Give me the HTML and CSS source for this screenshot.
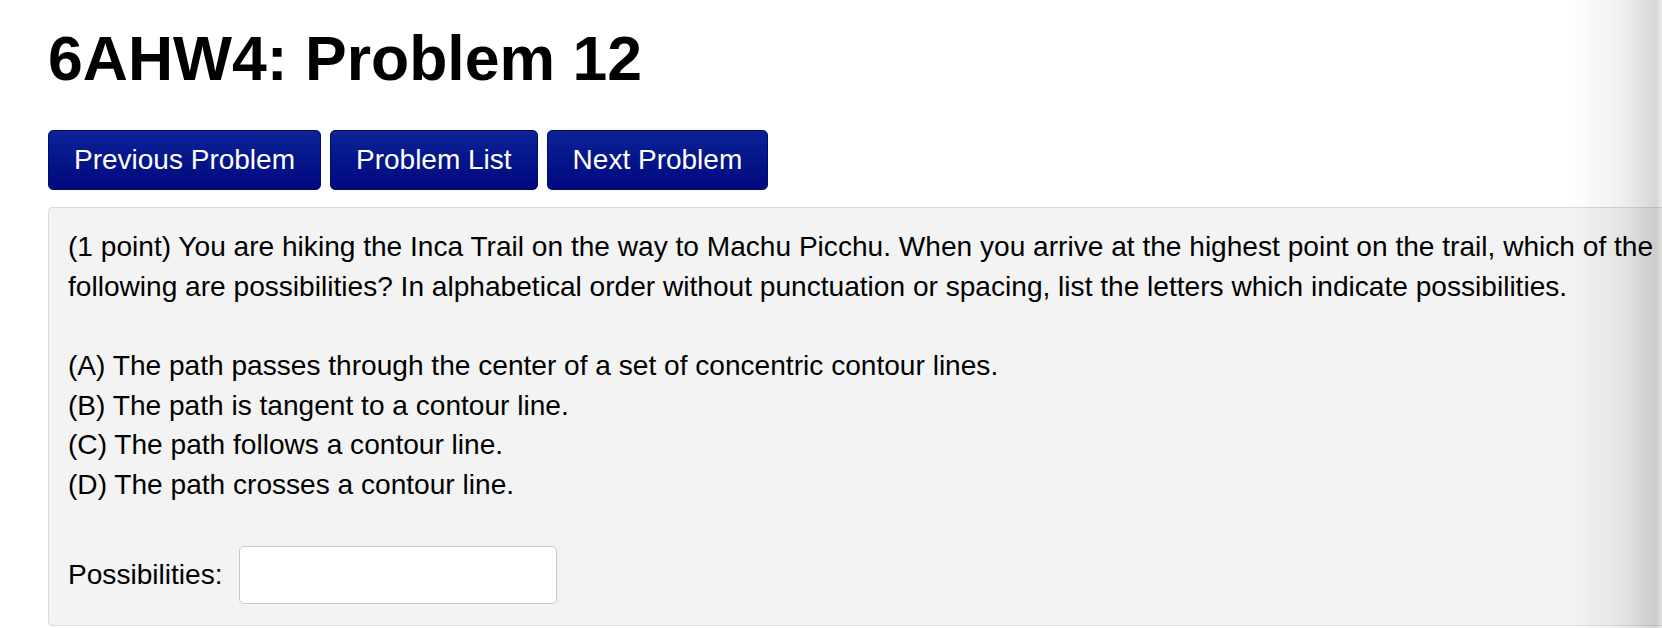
FILE: index.html
```html
<!DOCTYPE html>
<html>
<head>
  <title>6AHW4: Problem 12</title>
  <link rel="stylesheet" href="styles.css">
</head>
<body>
<div class="page">
  <h1 class="problem-title">6AHW4: Problem 12</h1>

  <div class="nav-buttons">
    <a class="nav-button" href="#">Previous Problem</a>
    <a class="nav-button" href="#">Problem List</a>
    <a class="nav-button" href="#">Next Problem</a>
  </div>

  <div class="problem-body">
    <p class="problem-text">
      (1 point) You are hiking the Inca Trail on the way to Machu Picchu. When you arrive at the highest point on the trail, which of the<br>
      following are possibilities? In alphabetical order without punctuation or spacing, list the letters which indicate possibilities.
    </p>
    <p class="problem-options">
      (A) The path passes through the center of a set of concentric contour lines.<br>
      (B) The path is tangent to a contour line.<br>
      (C) The path follows a contour line.<br>
      (D) The path crosses a contour line.
    </p>
    <div class="answer-row">
      <label for="answer-0" class="answer-label">Possibilities:</label>
      <input type="text" id="answer-0" class="answer-input" />
    </div>
  </div>
</div>
<div class="edge-shadow"></div>
</body>
</html>
```

FILE: styles.css
```css
html, body {
  margin: 0;
  padding: 0;
  width: 100%;
  height: 100%;
  overflow: hidden;
  background: #fff;
  font-family: "Liberation Sans", Arial, sans-serif;
  color: #000;
}

.page {
  padding: 21px 0 0 48px;
}

.problem-title {
  margin: 0;
  font-size: 62.5px;
  line-height: 74px;
  font-weight: bold;
}

.nav-buttons {
  display: flex;
  gap: 9px;
  margin-top: 35px;
}

.nav-button {
  display: block;
  padding: 13px 25px;
  font-size: 28px;
  line-height: 32px;
  color: #fff;
  text-decoration: none;
  border: 1px solid #020a6a;
  border-radius: 5px;
  background: linear-gradient(#0a2396, #00087f);
}

.problem-body {
  margin-top: 17px;
  margin-right: -60px;
  padding: 19px 19px 21px 19px;
  background: #f3f3f3;
  border: 1px solid #dcdcdc;
  border-radius: 4px;
  font-size: 28.1px;
  line-height: 39.6px;
}

.problem-body p {
  margin: 0;
  white-space: nowrap;
}

.problem-options {
  padding-top: 40px;
}

.answer-row {
  display: flex;
  align-items: center;
  gap: 16px;
  margin-top: 41px;
}

.answer-input {
  width: 318px;
  height: 58px;
  box-sizing: border-box;
  border: 1px solid #c8c8c8;
  border-radius: 5px;
  background: #fff;
  font-size: 28px;
}

.edge-shadow {
  position: fixed;
  top: 0;
  right: 0;
  width: 90px;
  height: 100%;
  background: linear-gradient(to right, rgba(0,0,0,0) 0%, rgba(0,0,0,0.06) 55%, rgba(0,0,0,0.16) 93%, rgba(0,0,0,0.08) 100%);
  pointer-events: none;
}
```
